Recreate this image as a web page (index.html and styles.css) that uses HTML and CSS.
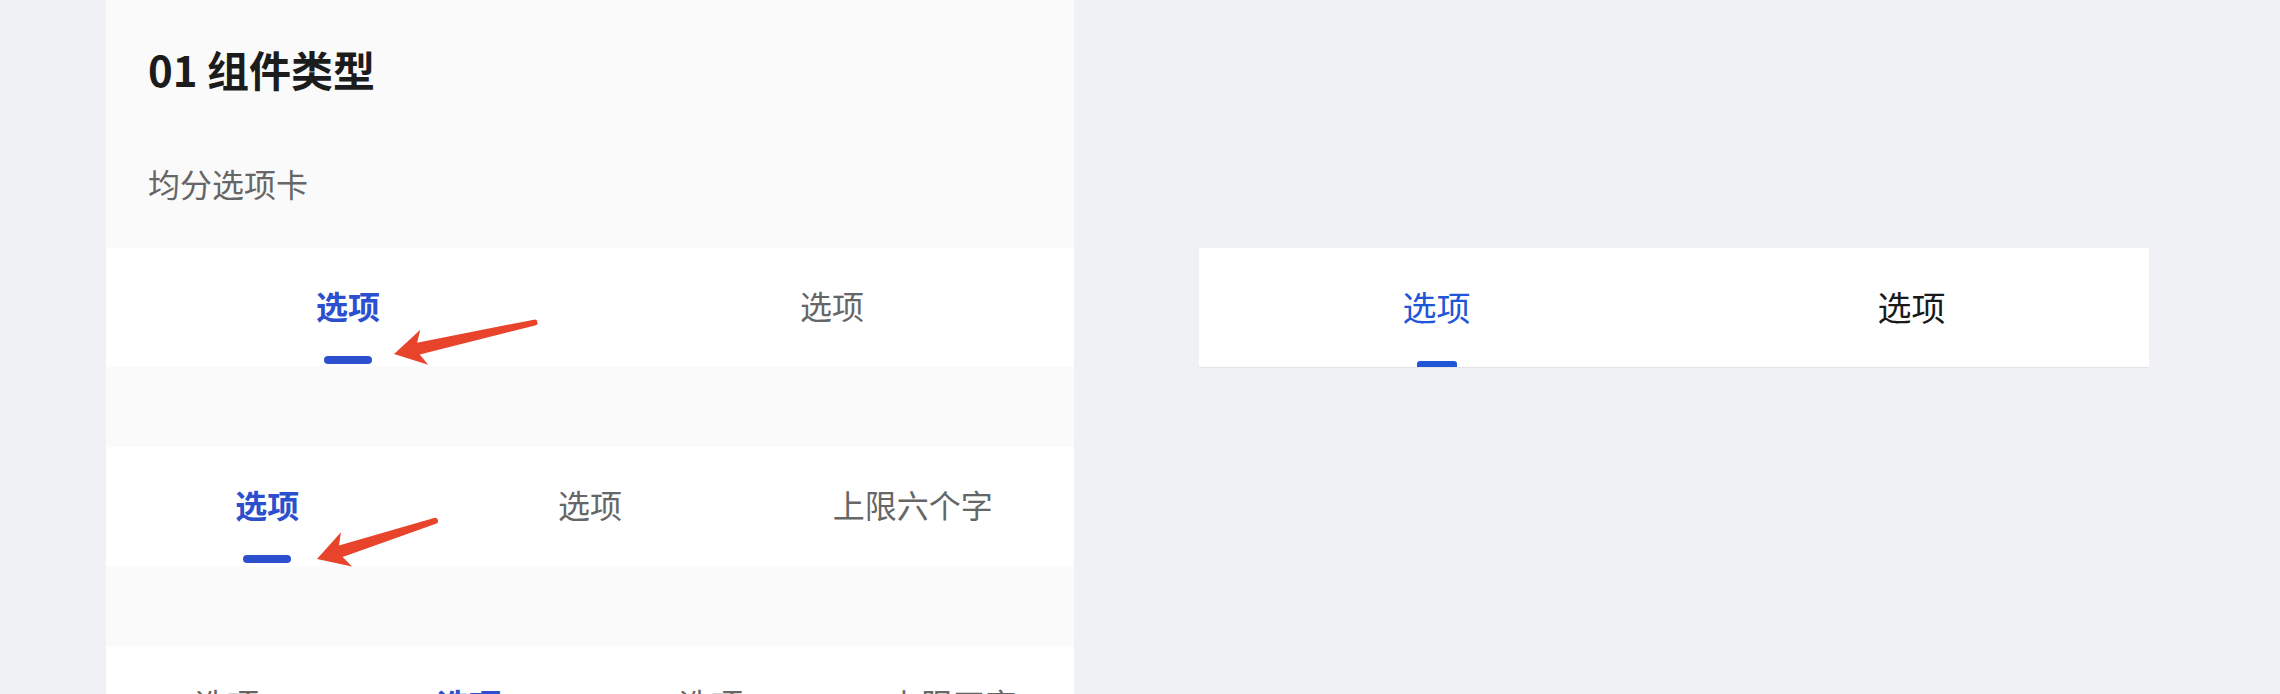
FILE: index.html
```html
<!DOCTYPE html>
<html lang="zh-CN">
<head>
<meta charset="utf-8">
<title>组件类型</title>
<link rel="stylesheet" href="styles.css">
</head>
<body>
<div class="page">
  <section class="panel">
    <h1 class="title">01 组件类型</h1>
    <p class="subtitle">均分选项卡</p>
    <div class="tabs first">
      <div class="tab active">选项</div>
      <div class="tab">选项</div>
    </div>
    <div class="tabs">
      <div class="tab active">选项</div>
      <div class="tab">选项</div>
      <div class="tab">上限六个字</div>
    </div>
    <div class="tabs">
      <div class="tab">选项</div>
      <div class="tab active">选项</div>
      <div class="tab">选项</div>
      <div class="tab">上限四字</div>
    </div>
    <svg class="arrows" viewBox="106 0 968 694" width="968" height="694" aria-hidden="true">
      <g transform="translate(394 354) rotate(-12.6)" fill="#e8432b">
        <path d="M0 0 L31 -18 L25 -6 L144 -3 A3 3 0 0 1 144 3 L25 6 L31 18 Z"/>
      </g>
      <g transform="translate(317 559) rotate(-17.9)" fill="#e8432b">
        <path d="M0 0 L31 -18 L25 -6 L124 -3 A3 3 0 0 1 124 3 L25 6 L31 18 Z"/>
      </g>
    </svg>
  </section>
  <section class="demo">
    <div class="demo-tab active">选项</div>
    <div class="demo-tab">选项</div>
  </section>
</div>
</body>
</html>
```
FILE: styles.css
```css
html, body {
  margin: 0;
  padding: 0;
}
body {
  background: #f0f1f5;
  font-family: "Noto Sans CJK SC", "Noto Sans", sans-serif;
}
.page {
  display: flex;
  align-items: flex-start;
  padding-left: 106px;
  height: 694px;
  overflow: hidden;
}
.panel {
  position: relative;
  width: 968px;
  height: 694px;
  flex: none;
  background: #fafafa;
  overflow: hidden;
}
.title {
  margin: 0;
  padding: 39px 0 0 42px;
  font-size: 42px;
  line-height: 60px;
  font-weight: 700;
  color: #1c1c1c;
}
.subtitle {
  margin: 62px 0 0;
  padding-left: 42px;
  font-size: 32px;
  line-height: 44px;
  color: #666666;
}
.tabs {
  display: flex;
  height: 119px;
  margin-top: 80px;
  background: #ffffff;
}
.tabs.first {
  margin-top: 43px;
}
.tab {
  position: relative;
  flex: 1;
  display: flex;
  align-items: center;
  justify-content: center;
  padding-bottom: 5px;
  font-size: 32px;
  color: #666666;
  white-space: nowrap;
}
.tab.active {
  color: #2c50cd;
  font-weight: 700;
}
.tab.active::after {
  content: "";
  position: absolute;
  left: 50%;
  bottom: 3px;
  width: 48px;
  height: 8px;
  margin-left: -24px;
  border-radius: 4px;
  background: #2c50cd;
}
.arrows {
  position: absolute;
  left: 0;
  top: 0;
}
.demo {
  display: flex;
  flex: none;
  width: 950px;
  height: 119px;
  margin: 248px 0 0 125px;
  background: #ffffff;
  box-shadow: 0 1px 0 #e4e4e6;
}
.demo-tab {
  position: relative;
  flex: 1;
  display: flex;
  align-items: center;
  justify-content: center;
  padding-bottom: 3px;
  font-size: 34px;
  color: #1a1a1a;
}
.demo-tab.active {
  color: #1f56d8;
}
.demo-tab.active::after {
  content: "";
  position: absolute;
  left: 50%;
  bottom: 0;
  width: 40px;
  height: 6px;
  margin-left: -20px;
  border-radius: 3px 3px 0 0;
  background: #1f56d8;
}
```
